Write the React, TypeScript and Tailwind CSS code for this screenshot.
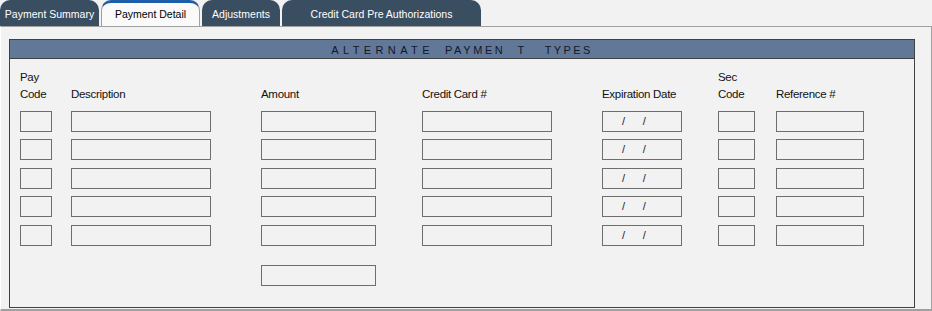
import React from "react";

const tabs = [
  { label: "Payment Summary", w: "w-[99px]", active: false },
  { label: "Payment Detail", w: "w-[99px]", active: true },
  { label: "Adjustments", w: "w-[78px]", active: false },
  { label: "Credit Card Pre Authorizations", w: "w-[199px]", active: false },
];

const rowGaps = ["mt-0", "mt-[7px]", "mt-[8px]", "mt-[7px]", "mt-[8px]"];

function Box({ w, date }: { w: string; date?: boolean }) {
  return (
    <div className={`${w} h-[21px] border border-[#6e6e6e] flex items-center`}>
      {date && (
        <div className="flex items-center text-[11px] leading-none text-[#1a1a3a] pl-[19px]">
          <span>/</span>
          <span className="ml-[18px]">/</span>
        </div>
      )}
    </div>
  );
}

export default function App() {
  return (
    <div className="w-[932px] h-[311px] bg-[#f2f2f2] overflow-hidden font-[Liberation_Sans,Arial,sans-serif]">
      <div className="flex h-[26px] gap-[2px]">
        {tabs.map((t) =>
          t.active ? (
            <div
              key={t.label}
              className={`${t.w} h-[26px] rounded-t-[10px] border-t-[3px] border-t-[#1d5ea9] border-x border-x-[#a0a0a0] bg-[#fafafa] flex items-center justify-center text-[10.5px] text-black pt-[1px]`}
            >
              {t.label}
            </div>
          ) : (
            <div
              key={t.label}
              className={`${t.w} h-[26px] rounded-t-[10px] bg-[#3a4e62] flex items-center justify-center text-[10.5px] text-white pt-[3px]`}
            >
              {t.label}
            </div>
          )
        )}
      </div>
      <div className="h-[285px] border-t border-t-[#a0a0a0] border-r border-r-[#a0a0a0] border-b-2 border-b-[#a0a0a0] border-l border-l-white pt-[12px] pl-[8px]">
        <div className="w-[906px] h-[269px] border border-[#404040]">
          <div className="h-[19px] border-b border-b-[#404040] bg-[#627898] flex items-center justify-center text-[11px] text-[#14172a] pt-[2px] whitespace-pre">
            <span className="tracking-[4.4px]">ALTERNATE</span>
            <span className="ml-[11px] tracking-[2.6px]">PAYMEN</span>
            <span className="ml-[12px] tracking-[2.6px]">T</span>
            <span className="ml-[18px] tracking-[2.4px]">TYPES</span>
          </div>
          <div className="pt-[10px] pl-[10px] text-[11.5px] tracking-[-0.3px] text-[#111]">
            <div className="grid grid-cols-[51px_190px_161px_180px_116px_58px_1fr] leading-[17px]">
              <div>Pay<br />Code</div>
              <div><br />Description</div>
              <div><br />Amount</div>
              <div><br />Credit Card #</div>
              <div><br />Expiration Date</div>
              <div>Sec<br />Code</div>
              <div><br />Reference #</div>
            </div>
            <div className="mt-[8px]">
              {rowGaps.map((g, i) => (
                <div key={i} className={`${g} grid grid-cols-[51px_190px_161px_180px_116px_58px_1fr]`}>
                  <Box w="w-[32px]" />
                  <Box w="w-[140px]" />
                  <Box w="w-[115px]" />
                  <Box w="w-[130px]" />
                  <Box w="w-[80px]" date />
                  <Box w="w-[37px]" />
                  <Box w="w-[88px]" />
                </div>
              ))}
              <div className="mt-[19px] grid grid-cols-[51px_190px_161px_180px_116px_58px_1fr]">
                <div />
                <div />
                <Box w="w-[115px]" />
              </div>
            </div>
          </div>
        </div>
      </div>
    </div>
  );
}
